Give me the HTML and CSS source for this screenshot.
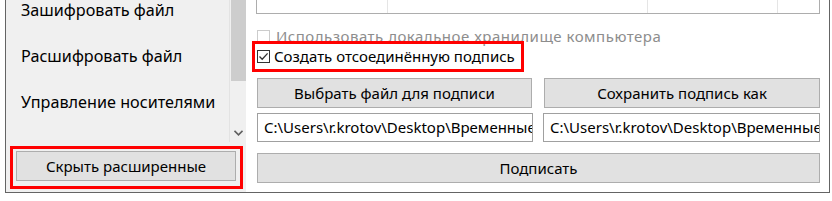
FILE: index.html
```html
<!DOCTYPE html>
<html lang="ru">
<head>
<meta charset="utf-8">
<title>Подпись</title>
<link rel="stylesheet" href="styles.css">
</head>
<body>
<div class="window">
  <div class="left">
    <div class="list">
      <div class="items">
        <div class="item">Зашифровать файл</div>
        <div class="item">Расшифровать файл</div>
        <div class="item">Управление носителями</div>
      </div>
      <div class="scrollbar">
        <div class="thumb"></div>
        <svg class="chev" width="9" height="6" viewBox="0 0 9 6"><polyline points="0.5,0.8 4.5,4.8 8.5,0.8" fill="none" stroke="#606060" stroke-width="1.6"/></svg>
      </div>
    </div>
    <div class="bottom">
      <div class="redbox">
        <div class="btn btn-hide">Скрыть расширенные</div>
      </div>
    </div>
  </div>
  <div class="right">
    <div class="listview">
      <div class="col c1"></div>
      <div class="col c2"></div>
      <div class="col c3"></div>
      <div class="col c4"></div>
    </div>
    <div class="chk disabled">
      <span class="box"></span>
      <span class="label">Использовать локальное хранилище компьютера</span>
    </div>
    <div class="chk checked">
      <span class="box"><svg width="11" height="11" viewBox="0 0 11 11"><polyline points="1.5,5.5 4.2,8.3 9.6,2.4" fill="none" stroke="#333" stroke-width="1.3"/></svg></span>
      <span class="label">Создать отсоединённую подпись</span>
      <span class="highlight"></span>
    </div>
    <div class="row two">
      <div class="btn">Выбрать файл для подписи</div>
      <div class="btn">Сохранить подпись как</div>
    </div>
    <div class="row two tb">
      <div class="text">C:\Users\r.krotov\Desktop\Временные</div>
      <div class="text">C:\Users\r.krotov\Desktop\Временные</div>
    </div>
    <div class="btn sign">Подписать</div>
  </div>
</div>
</body>
</html>
```
FILE: styles.css
```css
html, body {
  margin: 0;
  padding: 0;
  background: #ffffff;
}
body {
  width: 832px;
  height: 201px;
  overflow: hidden;
  font-family: "Noto Sans", "Open Sans", sans-serif;
  font-size: 15px;
  color: #000;
}
.window {
  margin-left: 5px;
  width: 823px;
  height: 192px;
  border: 1px solid #646464;
  border-top: none;
  display: flex;
  background: #ffffff;
}
.left {
  width: 240px;
  background: #f0f0f0;
  display: flex;
  flex-direction: column;
}
.list {
  height: 142px;
  display: flex;
  overflow: hidden;
}
.items {
  flex: 1;
  margin-top: -13px;
  border-right: 1px solid #e3e3e3;
}
.item {
  height: 46px;
  line-height: 46px;
  padding-left: 15px;
  font-size: 16.2px;
  white-space: nowrap;
}
.scrollbar {
  width: 16px;
  position: relative;
  display: flex;
  flex-direction: column;
  align-items: center;
}
.thumb {
  width: 15px;
  height: 81px;
  background: #cdcdcd;
}
.chev {
  margin-top: 49px;
}
.bottom {
  flex: 1;
  padding: 4px 0 0 4px;
}
.redbox {
  width: 224px;
  height: 35px;
  border: 3px solid #ff0000;
  padding: 2px 0 0 3px;
  box-sizing: content-box;
}
.btn {
  box-sizing: border-box;
  height: 30px;
  border: 1px solid #adadad;
  background: #e1e1e1;
  display: flex;
  align-items: center;
  justify-content: center;
  white-space: nowrap;
}
.btn-hide {
  width: 220px;
}
.right {
  flex: 1;
  padding: 0 9px 0 11px;
  display: flex;
  flex-direction: column;
}
.listview {
  height: 13px;
  margin-left: -1px;
  border: 1px solid #adadad;
  border-top: none;
  display: flex;
}
.col {
  border-right: 1px solid #e5e5e5;
}
.c1 { width: 130px; }
.c2 { width: 259px; }
.c3 { width: 129px; }
.c4 { flex: 1; border-right: none; }
.chk {
  height: 20px;
  display: flex;
  align-items: center;
  position: relative;
}
.chk.disabled {
  margin-top: 12px;
}
.box {
  box-sizing: border-box;
  width: 13px;
  height: 13px;
  border: 1px solid #333;
  background: #fff;
  display: flex;
  align-items: center;
  justify-content: center;
}
.disabled .box {
  border-color: #cccccc;
}
.label {
  margin-left: 4px;
  white-space: nowrap;
}
.disabled .label {
  margin-left: 6px;
  color: #8d8d8d;
  letter-spacing: 0.5px;
}
.highlight {
  position: absolute;
  left: -5px;
  top: -5px;
  width: 266px;
  height: 25px;
  border: 3px solid #ff0000;
}
.row.two {
  display: flex;
  justify-content: space-between;
  margin-top: 12px;
}
.row.two .btn {
  width: 275px;
}
.row.two .btn + .btn {
  width: 276px;
}
.row.tb {
  margin-top: 5px;
}
.text {
  box-sizing: border-box;
  width: 276px;
  height: 29px;
  border: 1px solid #a0a0a0;
  padding-left: 6px;
  line-height: 27px;
  overflow: hidden;
  white-space: nowrap;
  background: #fff;
}
.text + .text {
  width: 277px;
}
.sign {
  margin-top: 11px;
}
```
